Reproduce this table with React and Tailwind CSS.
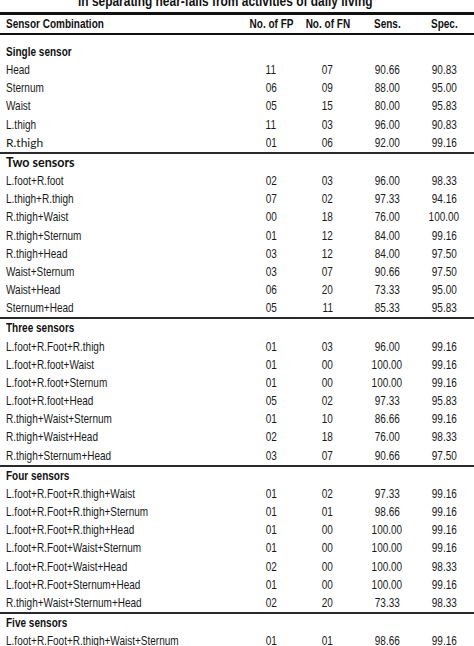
import React from 'react';

const arial = { fontFamily: '"Liberation Sans", Arial, sans-serif' };
const calibri = { fontFamily: 'Lato, "Open Sans", sans-serif' };

const groups = [
  {
    title: 'Single sensor',
    first: true,
    rows: [
      ['Head', '11', '07', '90.66', '90.83'],
      ['Sternum', '06', '09', '88.00', '95.00'],
      ['Waist', '05', '15', '80.00', '95.83'],
      ['L.thigh', '11', '03', '96.00', '90.83'],
      ['R.thigh', '01', '06', '92.00', '99.16', true],
    ],
  },
  {
    title: 'Two sensors',
    alt: true,
    rows: [
      ['L.foot+R.foot', '02', '03', '96.00', '98.33'],
      ['L.thigh+R.thigh', '07', '02', '97.33', '94.16'],
      ['R.thigh+Waist', '00', '18', '76.00', '100.00'],
      ['R.thigh+Sternum', '01', '12', '84.00', '99.16'],
      ['R.thigh+Head', '03', '12', '84.00', '97.50'],
      ['Waist+Sternum', '03', '07', '90.66', '97.50'],
      ['Waist+Head', '06', '20', '73.33', '95.00'],
      ['Sternum+Head', '05', '11', '85.33', '95.83'],
    ],
  },
  {
    title: 'Three sensors',
    rows: [
      ['L.foot+R.Foot+R.thigh', '01', '03', '96.00', '99.16'],
      ['L.foot+R.foot+Waist', '01', '00', '100.00', '99.16'],
      ['L.foot+R.foot+Sternum', '01', '00', '100.00', '99.16'],
      ['L.foot+R.foot+Head', '05', '02', '97.33', '95.83'],
      ['R.thigh+Waist+Sternum', '01', '10', '86.66', '99.16'],
      ['R.thigh+Waist+Head', '02', '18', '76.00', '98.33'],
      ['R.thigh+Sternum+Head', '03', '07', '90.66', '97.50'],
    ],
  },
  {
    title: 'Four sensors',
    rows: [
      ['L.foot+R.Foot+R.thigh+Waist', '01', '02', '97.33', '99.16'],
      ['L.foot+R.Foot+R.thigh+Sternum', '01', '01', '98.66', '99.16'],
      ['L.foot+R.Foot+R.thigh+Head', '01', '00', '100.00', '99.16'],
      ['L.foot+R.Foot+Waist+Sternum', '01', '00', '100.00', '99.16'],
      ['L.foot+R.Foot+Waist+Head', '02', '00', '100.00', '98.33'],
      ['L.foot+R.Foot+Sternum+Head', '01', '00', '100.00', '99.16'],
      ['R.thigh+Waist+Sternum+Head', '02', '20', '73.33', '98.33'],
    ],
  },
  {
    title: 'Five sensors',
    rows: [
      ['L.foot+R.Foot+R.thigh+Waist+Sternum', '01', '01', '98.66', '99.16'],
    ],
  },
];

// narrow text: Arial squeezed to look like Arial Narrow
function N({ children, left }) {
  return (
    <span className={`inline-block whitespace-nowrap scale-x-[0.77] ${left ? 'origin-left' : 'origin-center'}`}>
      {children}
    </span>
  );
}

function Row({ cells }) {
  const [name, fp, fn, sens, spec, odd] = cells;
  return (
    <div className="grid grid-cols-[243px_56px_57px_62px_52px_1fr] h-[18.2px] items-center text-[13px] leading-[18px] text-[#1a1a1a]">
      <div className="pl-[6px] whitespace-nowrap">
        {odd ? (
          <span className="text-[12px]" style={calibri}>{name}</span>
        ) : (
          <N left>{name}</N>
        )}
      </div>
      <div className="text-center"><N>{fp}</N></div>
      <div className="text-center"><N>{fn}</N></div>
      <div className="text-center"><N>{sens}</N></div>
      <div className="text-center"><N>{spec}</N></div>
      <div />
    </div>
  );
}

function Group({ group }) {
  return (
    <div className={group.first ? 'pt-[8px]' : 'border-t-2 border-[#2a2a2a]'}>
      <div className="h-[18px] flex items-center pl-[6px] font-bold text-[13px] leading-[18px] text-[#111]">
        {group.alt ? (
          <span className="text-[12.5px]" style={calibri}>{group.title}</span>
        ) : (
          <N left>{group.title}</N>
        )}
      </div>
      {group.rows.map((r, i) => (
        <Row key={i} cells={r} />
      ))}
    </div>
  );
}

export default function App() {
  return (
    <div className="w-[474px] h-[646px] overflow-hidden bg-white" style={arial}>
      {/* caption, mostly cut off by the top edge */}
      <div className="-mt-[8px] mb-[3px] pr-[24px] text-center font-bold text-[15.5px] leading-[17px] text-[#111]">
        <N>in separating near-falls from activities of daily living</N>
      </div>
      <div className="border-t-[3px] border-[#111]">
        <div className="grid grid-cols-[243px_56px_57px_62px_52px_1fr] h-[18px] items-center font-bold text-[13px] leading-[18px] text-[#111] border-b-2 border-[#111] box-content">
          <div className="pl-[6px]"><N left>Sensor Combination</N></div>
          <div className="text-center"><N>No. of FP</N></div>
          <div className="text-center"><N>No. of FN</N></div>
          <div className="text-center"><N>Sens.</N></div>
          <div className="text-center"><N>Spec.</N></div>
          <div />
        </div>
        {groups.map((g) => (
          <Group key={g.title} group={g} />
        ))}
      </div>
    </div>
  );
}
